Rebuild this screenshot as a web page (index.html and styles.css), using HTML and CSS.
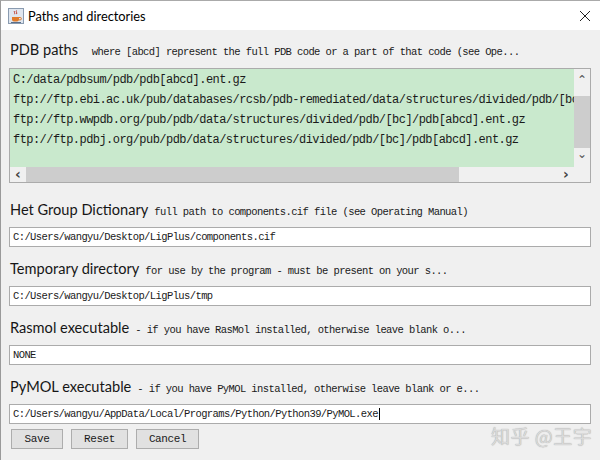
FILE: index.html
```html
<!DOCTYPE html>
<html lang="en">
<head>
  <meta charset="UTF-8" />
  <title>Paths and directories</title>
  <link rel="stylesheet" href="styles.css">
</head>
<body>
  <div class="window">
    <div class="titlebar">
      <svg class="app-icon" width="16" height="16" viewBox="0 0 16 16">
        <rect x="0.5" y="0.5" width="15" height="15" fill="#dfe6ef" stroke="#8a9bb0"/>
        <path d="M4 9h7v2.5a2 2 0 0 1-2 2H6a2 2 0 0 1-2-2z" fill="#e07b2a"/>
        <path d="M11 9.5h1.2a1.2 1.2 0 0 1 0 2.4H11" fill="none" stroke="#e07b2a" stroke-width="1"/>
        <path d="M6.5 3c-1 1.2 1 1.8 0 3.2M8.5 2.5c-1 1.4 1 2 0 3.6" fill="none" stroke="#c0392b" stroke-width="1"/>
        <rect x="3" y="14" width="10" height="1" fill="#5a6f8a"/>
      </svg>
      <span class="title">Paths and directories</span>
      <svg class="close" width="12" height="12" viewBox="0 0 12 12">
        <path d="M1 1L11 11M11 1L1 11" stroke="#222" stroke-width="1"/>
      </svg>
    </div>

    <div class="content">
      <div class="field-head">
        <span class="label">PDB paths</span>
        <span class="desc desc-wide"> where [abcd] represent the full PDB code or a part of that code (see Ope...</span>
      </div>
      <div class="pathbox">
        <div class="pathbox-main">
          <div class="pathbox-text">
            <div>C:/data/pdbsum/pdb/pdb[abcd].ent.gz</div>
            <div>ftp://ftp.ebi.ac.uk/pub/databases/rcsb/pdb-remediated/data/structures/divided/pdb/[bc</div>
            <div>ftp://ftp.wwpdb.org/pub/pdb/data/structures/divided/pdb/[bc]/pdb[abcd].ent.gz</div>
            <div>ftp://ftp.pdbj.org/pub/pdb/data/structures/divided/pdb/[bc]/pdb[abcd].ent.gz</div>
          </div>
          <div class="vscroll">
            <span class="arrow">&#8963;</span>
            <div class="vthumb"></div>
            <span class="arrow down">&#8964;</span>
          </div>
        </div>
        <div class="hscroll">
          <span class="harrow">&lsaquo;</span>
          <div class="htrack"><div class="hthumb"></div></div>
          <span class="harrow">&rsaquo;</span>
        </div>
      </div>

      <div class="field-head gap-top">
        <span class="label">Het Group Dictionary</span>
        <span class="desc">full path to components.cif file (see Operating Manual)</span>
      </div>
      <div class="input">C:/Users/wangyu/Desktop/LigPlus/components.cif</div>

      <div class="field-head">
        <span class="label">Temporary directory</span>
        <span class="desc">for use by the program - must be present on your s...</span>
      </div>
      <div class="input">C:/Users/wangyu/Desktop/LigPlus/tmp</div>

      <div class="field-head">
        <span class="label">Rasmol executable</span>
        <span class="desc">- if you have RasMol installed, otherwise leave blank o...</span>
      </div>
      <div class="input">NONE</div>

      <div class="field-head">
        <span class="label">PyMOL executable</span>
        <span class="desc">- if you have PyMOL installed, otherwise leave blank or e...</span>
      </div>
      <div class="input"><span class="caret">C:/Users/wangyu/AppData/Local/Programs/Python/Python39/PyMOL.exe</span></div>

      <div class="buttons">
        <button class="btn">Save</button>
        <button class="btn">Reset</button>
        <button class="btn">Cancel</button>
      </div>
    </div>

    <div class="watermark">知乎 @王宇</div>
  </div>
</body>
</html>
```

FILE: styles.css
```css
:root {
  --bg: #f0f0f0;
  --border: #ababab;
  --green: #c9e9cd;
  --thumb: #cdcdcd;
  --text: #111;
  --mono: "Liberation Mono", "DejaVu Sans Mono", monospace;
}
html, body {
  margin: 0;
  padding: 0;
  background: var(--bg);
}
.window {
  position: relative;
  width: 600px;
  height: 460px;
  background: var(--bg);
  border-left: 1px solid #9a9a9a;
  border-top: 1px solid #aaa;
  box-sizing: border-box;
  overflow: hidden;
}
.titlebar {
  height: 29px;
  background: #fff;
  display: flex;
  align-items: center;
  padding-left: 7px;
  font-family: "Lato", "Open Sans", sans-serif;
  font-size: 12.8px;
  color: #000;
}
.app-icon { margin-right: 4px; }
.close { margin-left: auto; margin-right: 9px; }

.content {
  padding: 8px 9px 0 8px;
}
.field-head {
  display: flex;
  align-items: baseline;
  height: 24px;
  line-height: 24px;
  padding-left: 1px;
  white-space: pre;
  overflow: hidden;
}
.label {
  font-family: "Lato", "Open Sans", sans-serif;
  font-size: 14.6px;
  color: #161616;
}
.desc {
  font-family: var(--mono);
  font-size: 10.5px;
  letter-spacing: -0.6px;
  color: #1a1a1a;
  margin-left: 6px;
}
.desc-wide { margin-left: 8px; }
.gap-top { margin-top: 15px; }

.pathbox {
  margin-top: 6px;
  height: 115px;
  border: 1px solid var(--border);
  box-sizing: border-box;
  display: flex;
  flex-direction: column;
  background: var(--bg);
}
.pathbox-main {
  flex: 1;
  display: flex;
  min-height: 0;
}
.pathbox-text {
  flex: 1;
  background: var(--green);
  padding: 1px 3px;
  font-family: var(--mono);
  font-size: 12px;
  letter-spacing: -0.55px;
  line-height: 20px;
  color: #1a1a1a;
  white-space: nowrap;
  overflow: hidden;
}
.vscroll {
  width: 16px;
  display: flex;
  flex-direction: column;
  align-items: center;
  background: var(--bg);
}
.arrow {
  height: 20px;
  line-height: 22px;
  font-size: 12px;
  color: #555;
  font-family: "DejaVu Sans", sans-serif;
}
.arrow.down { line-height: 12px; }
.vthumb {
  width: 16px;
  height: 54px;
  margin-top: 7px;
  margin-bottom: auto;
  background: var(--thumb);
}
.hscroll {
  height: 15px;
  display: flex;
  align-items: center;
  padding-right: 16px;
  background: var(--bg);
}
.harrow {
  width: 16px;
  text-align: center;
  font-family: "DejaVu Sans", sans-serif;
  font-size: 14px;
  font-weight: bold;
  line-height: 15px;
  color: #444;
}
.htrack {
  flex: 1;
  height: 15px;
}
.hthumb {
  width: 433px;
  height: 15px;
  background: var(--thumb);
}

.input {
  margin-top: 5px;
  margin-bottom: 10px;
  height: 20px;
  border: 1px solid var(--border);
  background: #fff;
  box-sizing: border-box;
  padding: 0 3px;
  font-family: var(--mono);
  font-size: 10.5px;
  letter-spacing: -0.6px;
  line-height: 18px;
  color: #1a1a1a;
  white-space: nowrap;
}
.caret {
  border-right: 1px solid #000;
  padding-right: 1px;
}

.buttons {
  display: flex;
  gap: 8px;
  margin-top: -5px;
  padding-left: 2px;
}
.btn {
  height: 20px;
  padding: 0 10px;
  background: #e1e1e1;
  border: 1px solid #adadad;
  font-family: var(--mono);
  font-size: 11px;
  letter-spacing: -0.4px;
  color: #1a1a1a;
}
.btn:nth-child(1) { width: 52px; }
.btn:nth-child(2) { width: 57px; }
.btn:nth-child(3) { width: 63px; }

.watermark {
  position: absolute;
  left: 490px;
  top: 421px;
  font-family: "Noto Sans CJK SC", sans-serif;
  font-size: 19px;
  color: #dadada;
  text-shadow: 0 0 1px #999;
  letter-spacing: 0.5px;
}
```
